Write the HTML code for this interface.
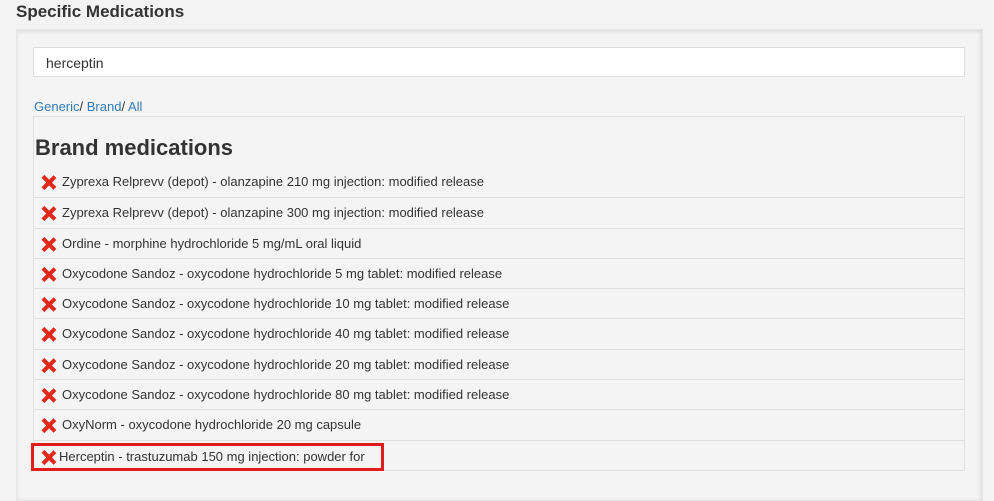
<!DOCTYPE html>
<html><head><style>
body{margin:0;width:994px;height:490px;background:#f3f3f3;font-family:"Liberation Sans",sans-serif;color:#333;position:relative;overflow:hidden}
h3{position:absolute;left:16px;top:2px;margin:0;font-size:17px;font-weight:bold;color:#333}
.panel{position:absolute;left:16px;top:29px;width:965px;height:470px;background:#f4f4f4;box-shadow:inset 0 2px 4px rgba(0,0,0,.08), inset -3px 0 4px rgba(0,0,0,.04);border:1px solid #e6e6e6}
.inp{position:absolute;left:33px;top:47px;height:30px;background:#fff;border:1px solid #ddd;font-size:14px;line-height:30px;padding-left:12px;box-sizing:border-box;width:932px}
.links{position:absolute;left:34px;top:99px;font-size:13px;color:#333}
.links a{color:#337ab7;text-decoration:none}
.box{position:absolute;left:33px;top:116px;width:932px;height:355px;border:1px solid #e0e0e0;box-sizing:border-box}
.h{position:absolute;left:35px;top:135px;font-size:22px;color:#333;margin:0;font-weight:bold}
.row{position:absolute;left:33px;width:932px;height:31px;border-top:1px solid #e0e0e0;box-sizing:border-box;font-size:13px;line-height:29px;padding-left:29px}
.x{position:absolute;left:8px;top:8px;width:15px;height:15px}
.x:before,.x:after{content:"";position:absolute;left:6px;top:-1px;width:3.5px;height:17px;background:#e0291c}
.x:before{transform:rotate(45deg)}.x:after{transform:rotate(-45deg)}
.red{position:absolute;left:31px;top:443px;width:353px;height:28px;border:3px solid #e21c1c;box-sizing:border-box}
</style></head><body>
<h3>Specific Medications</h3>
<div class="panel"></div>
<div class="inp">herceptin</div>
<div class="links"><a>Generic</a>/ <a>Brand</a>/ <a>All</a></div>
<div class="box"></div>
<div class="h">Brand medications</div>
<div class="row" style="top:167px;border-top:none"><span class="x"></span>Zyprexa Relprevv (depot) - olanzapine 210 mg injection: modified release</div>
<div class="row" style="top:197px"><span class="x"></span>Zyprexa Relprevv (depot) - olanzapine 300 mg injection: modified release</div>
<div class="row" style="top:228px"><span class="x"></span>Ordine - morphine hydrochloride 5 mg/mL oral liquid</div>
<div class="row" style="top:258px"><span class="x"></span>Oxycodone Sandoz - oxycodone hydrochloride 5 mg tablet: modified release</div>
<div class="row" style="top:288px"><span class="x"></span>Oxycodone Sandoz - oxycodone hydrochloride 10 mg tablet: modified release</div>
<div class="row" style="top:318px"><span class="x"></span>Oxycodone Sandoz - oxycodone hydrochloride 40 mg tablet: modified release</div>
<div class="row" style="top:349px"><span class="x"></span>Oxycodone Sandoz - oxycodone hydrochloride 20 mg tablet: modified release</div>
<div class="row" style="top:379px"><span class="x"></span>Oxycodone Sandoz - oxycodone hydrochloride 80 mg tablet: modified release</div>
<div class="row" style="top:409px"><span class="x"></span>OxyNorm - oxycodone hydrochloride 20 mg capsule</div>
<div class="row" style="top:440px;padding-left:26px;line-height:32px"><span class="x" style="top:9px"></span>Herceptin - trastuzumab 150 mg injection: powder for</div>
<div class="red"></div>
</body></html>
